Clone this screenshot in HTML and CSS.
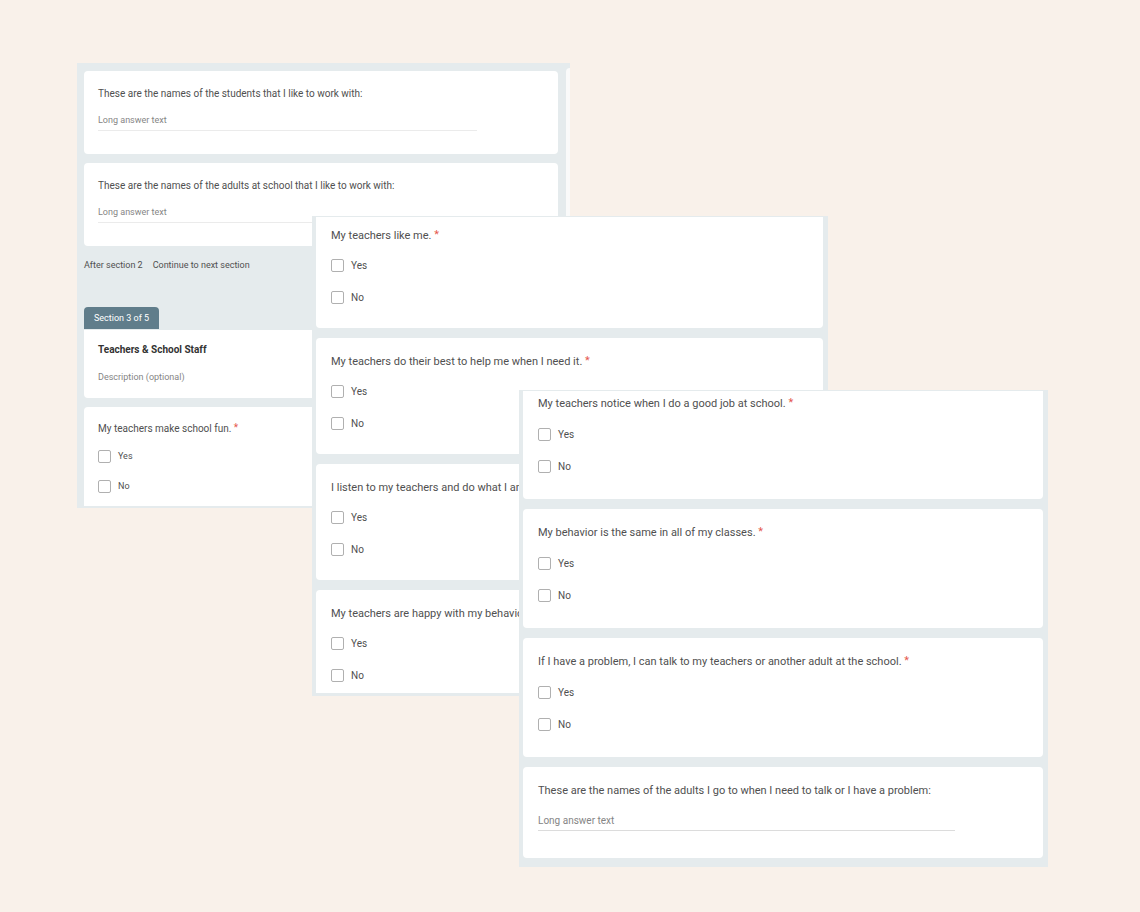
FILE: index.html
```html
<!DOCTYPE html>
<html lang="en">
<head>
  <meta charset="UTF-8" />
  <meta name="viewport" content="width=device-width, initial-scale=1.0" />
  <title>School Survey</title>
  <link rel="stylesheet" href="styles.css">
</head>
<body>
  <main class="board">

    <section class="sheet sheet-small">
      <div class="cards">
        <div class="card card-answer">
          <label class="question" for="students">These are the names of the students that I like to work with:</label>
          <input class="answer" type="text" id="students" placeholder="Long answer text">
        </div>
        <div class="card card-answer">
          <label class="question" for="adults">These are the names of the adults at school that I like to work with:</label>
          <input class="answer" type="text" id="adults" placeholder="Long answer text">
        </div>
        <p class="after"><span>After section 2</span><span>Continue to next section</span></p>
        <div class="section-tag">Section 3 of 5</div>
        <div class="card card-title">
          <h2 class="title">Teachers &amp; School Staff</h2>
          <input class="description" type="text" placeholder="Description (optional)" aria-label="Description">
        </div>
        <fieldset class="card card-last">
          <legend class="question">My teachers make school fun. <span class="required">*</span></legend>
          <label class="option"><input type="checkbox">Yes</label>
          <label class="option"><input type="checkbox">No</label>
        </fieldset>
      </div>
      <div class="toolbar"></div>
    </section>

    <section class="sheet sheet-medium">
      <div class="cards">
        <fieldset class="card card-first">
          <legend class="question">My teachers like me. <span class="required">*</span></legend>
          <label class="option"><input type="checkbox">Yes</label>
          <label class="option"><input type="checkbox">No</label>
        </fieldset>
        <fieldset class="card">
          <legend class="question">My teachers do their best to help me when I need it. <span class="required">*</span></legend>
          <label class="option"><input type="checkbox">Yes</label>
          <label class="option"><input type="checkbox">No</label>
        </fieldset>
        <fieldset class="card">
          <legend class="question">I listen to my teachers and do what I am</legend>
          <label class="option"><input type="checkbox">Yes</label>
          <label class="option"><input type="checkbox">No</label>
        </fieldset>
        <fieldset class="card card-last">
          <legend class="question">My teachers are happy with my behavior</legend>
          <label class="option"><input type="checkbox">Yes</label>
          <label class="option"><input type="checkbox">No</label>
        </fieldset>
      </div>
    </section>

    <section class="sheet sheet-large">
      <div class="cards">
        <fieldset class="card card-first">
          <legend class="question">My teachers notice when I do a good job at school. <span class="required">*</span></legend>
          <label class="option"><input type="checkbox">Yes</label>
          <label class="option"><input type="checkbox">No</label>
        </fieldset>
        <fieldset class="card">
          <legend class="question">My behavior is the same in all of my classes. <span class="required">*</span></legend>
          <label class="option"><input type="checkbox">Yes</label>
          <label class="option"><input type="checkbox">No</label>
        </fieldset>
        <fieldset class="card">
          <legend class="question">If I have a problem, I can talk to my teachers or another adult at the school. <span class="required">*</span></legend>
          <label class="option"><input type="checkbox">Yes</label>
          <label class="option"><input type="checkbox">No</label>
        </fieldset>
        <div class="card card-answer">
          <label class="question" for="helpers">These are the names of the adults I go to when I need to talk or I have a problem:</label>
          <input class="answer" type="text" id="helpers" placeholder="Long answer text">
        </div>
      </div>
    </section>

  </main>
</body>
</html>
```

FILE: styles.css
```css
* {
  box-sizing: border-box;
}
body {
  margin: 0;
  background: #f9f1ea;
  color: #505050;
  font-family: Roboto, sans-serif;
  font-size: 10px;
}
/* the three sheets share one row and overlap across its columns */
.board {
  display: grid;
  grid-template-columns: 77fr 235fr 207fr 51fr 258fr 220fr 92fr;
  align-items: start;
  min-height: 100vh;
}
.sheet {
  display: flex;
  grid-row: 1;
  min-width: 0;
  background: #e5ebed;
}
.sheet-small {
  grid-column: 2 / 5;
  margin-top: 63px;
  padding: 8px 0 2px 7px;
  font-size: 9px;
}
.sheet-medium {
  grid-column: 3 / 6;
  margin-top: 216px;
  padding: 1px 5px 3px 4px;
}
.sheet-large {
  grid-column: 4 / 7;
  margin-top: 390px;
  padding: 1px 5px 9px 4px;
}
.cards {
  flex: 1;
  min-width: 0;
  display: flex;
  flex-direction: column;
  gap: 10px;
}
.card {
  margin: 0;
  min-width: 0;
  border: none;
  border-radius: 4px;
  background: #fff;
  padding: 16px 15px 23px;
  display: flex;
  flex-direction: column;
}
.card-first {
  border-radius: 0 0 4px 4px;
}
.card-last {
  border-radius: 4px 4px 0 0;
}
/* float keeps the legend inside the padding of the fieldset */
legend {
  float: left;
}
.question {
  padding: 0;
  font-size: 11px;
  line-height: 16px;
  white-space: nowrap;
}
.required {
  color: #e5574e;
  line-height: 1;
  vertical-align: 1px;
}
.option {
  display: flex;
  align-items: center;
  gap: 7px;
  height: 16px;
  margin-top: 16px;
}
.question + .option {
  margin-top: 13px;
}
input[type="checkbox"] {
  appearance: none;
  width: 13px;
  height: 13px;
  margin: 0;
  border: 1px solid #b0b0b0;
  border-radius: 2px;
  background: #fff;
}
.answer,
.description {
  border: none;
  padding: 0;
  background: none;
  font: inherit;
  line-height: 16px;
}
.answer {
  width: 85%;
  height: 19px;
  margin-top: 13px;
  padding-bottom: 2px;
  border-bottom: 1px solid #dcdcdc;
}
::placeholder {
  color: #858585;
  opacity: 1;
}

/* first sheet */
.sheet-small .cards {
  gap: 9px;
}
.sheet-small .question {
  font-size: 10px;
}
.sheet-small .card {
  padding: 14px 14px 12px;
}
.sheet-small .card-answer {
  padding: 15px 14px 23px;
}
.sheet-small .answer {
  margin-top: 10px;
  border-bottom-color: #ebebeb;
}
.sheet-small .option {
  margin-top: 14px;
}
.sheet-small .question + .option {
  margin-top: 11px;
}
.after {
  display: flex;
  gap: 10px;
  margin: 0 0 23px;
  line-height: 20px;
}
.section-tag {
  align-self: flex-start;
  margin-bottom: -8px;
  padding: 0 10px;
  border-radius: 4px 4px 0 0;
  background: #607d8b;
  color: #fff;
  line-height: 22px;
}
.sheet-small .card-title {
  padding: 12px 14px 13px;
  border-radius: 0 0 4px 4px;
}
.title {
  margin: 0 0 11px;
  color: #333;
  font-size: 10px;
  line-height: 16px;
}
.description {
  height: 16px;
}
/* edge of the side toolbar */
.toolbar {
  width: 4px;
  margin: -3px 0 0 8px;
  border-radius: 4px 0 0 0;
  background: #fafafa;
}

/* second sheet */
.sheet-medium .card-first {
  padding-top: 11px;
}
.sheet-medium .card-last {
  padding-bottom: 10px;
}

/* third sheet */
.sheet-large .card {
  padding-bottom: 25px;
}
.sheet-large .card-first {
  padding-top: 5px;
}
.sheet-large .question + .option {
  margin-top: 14px;
}
.sheet-large .card-answer {
  padding-bottom: 27px;
}
```
